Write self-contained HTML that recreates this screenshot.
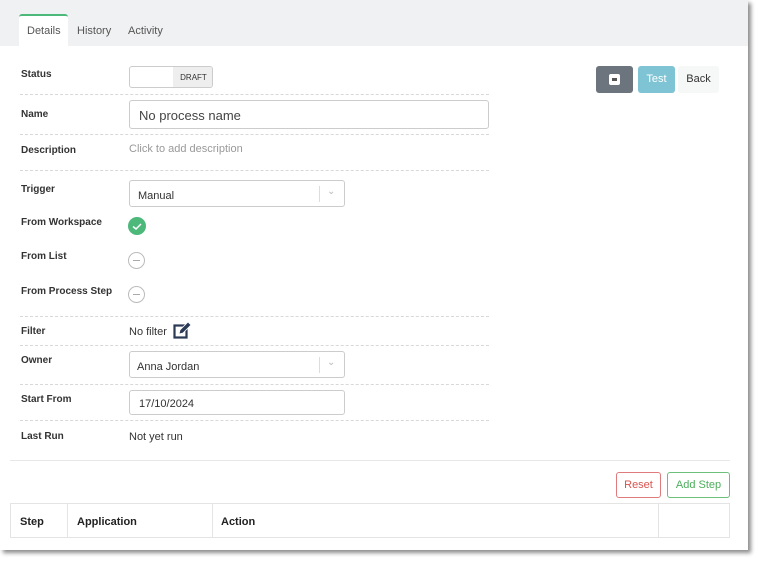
<!DOCTYPE html>
<html><head><style>
*{margin:0;padding:0;box-sizing:border-box}
body{width:758px;height:562px;background:#fff;font-family:"Liberation Sans",sans-serif;font-size:11px;color:#333;position:relative;overflow:hidden}
.panel{position:absolute;left:0;top:0;width:748px;height:550px;background:#fff;box-shadow:3px 3px 4px rgba(0,0,0,.45)}
.hdr{position:absolute;left:0;top:0;width:748px;height:46px;background:#f0f1f2}
.tab{position:absolute;top:21px;font-size:11px;color:#555}
.a{position:absolute}
.lbl{position:absolute;left:21px;font-weight:bold;font-size:10px;color:#333}
.dash{position:absolute;left:20px;width:469px;border-top:1px dashed #d8d8d8}
.box{position:absolute;border:1px solid #ccc;border-radius:3px;background:#fff}
.circ{position:absolute;width:17px;height:17px;border-radius:50%;border:1px solid #bbb}
.circ:after{content:"";position:absolute;left:4px;top:7px;width:7px;border-top:1px solid #aaa}
</style></head><body>
<div class="panel"></div>
<div class="hdr"></div>
<div class="a" style="left:19px;top:14px;width:49px;height:33px;background:#fff;border-top:2px solid #4cb87a;border-radius:3px 3px 0 0"></div>
<div class="tab" style="left:27px;top:25px">Details</div>
<div class="tab" style="left:77px;top:25px">History</div>
<div class="tab" style="left:128px;top:25px">Activity</div>

<div class="lbl" style="top:69px">Status</div>
<div class="box" style="left:129px;top:66px;width:84px;height:22px;overflow:hidden"><div class="a" style="left:43px;top:0;width:41px;height:22px;background:#eee;font-size:8px;color:#333;text-align:center;line-height:21px">DRAFT</div></div>
<div class="dash" style="top:94px"></div>
<div class="lbl" style="top:109px">Name</div>
<div class="box" style="left:129px;top:100px;width:360px;height:29px;font-size:13px;color:#444;padding:7px 0 0 9px">No process name</div>
<div class="dash" style="top:134px"></div>
<div class="lbl" style="top:145px">Description</div>
<div class="a" style="left:129px;top:143px;color:#999">Click to add description</div>
<div class="dash" style="top:170px"></div>
<div class="lbl" style="top:184px">Trigger</div>
<div class="box" style="left:129px;top:180px;width:216px;height:27px;padding:9px 0 0 8px">Manual<div class="a" style="left:189px;top:5px;height:16px;border-left:1px solid #ddd"></div><div class="a" style="left:197px;top:5px;color:#bbb;font-size:10px">&#8964;</div></div>
<div class="lbl" style="top:217px">From Workspace</div>
<div class="a" style="left:128px;top:217px;width:18px;height:18px;border-radius:50%;background:#4cb87a"><svg width="18" height="18"><path d="M5 9.5l3 2.5 5-5" stroke="#fff" stroke-width="1.5" fill="none"/></svg></div>
<div class="lbl" style="top:251px">From List</div>
<div class="circ" style="left:128px;top:252px"></div>
<div class="lbl" style="top:286px">From Process Step</div>
<div class="circ" style="left:128px;top:286px"></div>
<div class="dash" style="top:316px"></div>
<div class="lbl" style="top:326px">Filter</div>
<div class="a" style="left:129px;top:326px">No filter</div>
<svg class="a" style="left:173px;top:321px" width="20" height="18"><rect x="1.5" y="4.5" width="12" height="12" fill="none" stroke="#2a3a55" stroke-width="2.2"/><path d="M6 13l1-4 8-8 3 3-8 8z" fill="#2a3a55" stroke="#fff" stroke-width=".8"/></svg>
<div class="dash" style="top:345px"></div>
<div class="lbl" style="top:355px">Owner</div>
<div class="box" style="left:129px;top:351px;width:216px;height:27px;padding:9px 0 0 7px">Anna Jordan<div class="a" style="left:189px;top:5px;height:16px;border-left:1px solid #ddd"></div><div class="a" style="left:197px;top:5px;color:#bbb;font-size:10px">&#8964;</div></div>
<div class="dash" style="top:384px"></div>
<div class="lbl" style="top:394px">Start From</div>
<div class="box" style="left:129px;top:390px;width:216px;height:25px;padding:7px 0 0 9px">17/10/2024</div>
<div class="dash" style="top:420px"></div>
<div class="lbl" style="top:431px">Last Run</div>
<div class="a" style="left:129px;top:431px">Not yet run</div>
<div class="a" style="left:10px;top:460px;width:720px;border-top:1px solid #e8e8e8"></div>

<div class="a" style="left:596px;top:66px;width:37px;height:27px;background:#6c757d;border-radius:3px"><div class="a" style="left:13px;top:8px;width:11px;height:11px;background:#fff;border-radius:2px"><div class="a" style="left:3px;top:4px;width:5px;height:3px;background:#555"></div></div></div>
<div class="a" style="left:638px;top:66px;width:37px;height:27px;background:#7ec4d4;border-radius:3px;color:#fff;text-align:center;line-height:27px;font-size:11px">Test</div>
<div class="a" style="left:678px;top:66px;width:41px;height:27px;background:#f6f7f7;border-radius:3px;color:#333;text-align:center;line-height:27px;font-size:11px">Back</div>

<div class="a" style="left:616px;top:472px;width:45px;height:26px;border:1px solid #e07b7b;border-radius:3px;color:#d9534f;text-align:center;line-height:24px">Reset</div>
<div class="a" style="left:667px;top:472px;width:63px;height:26px;border:1px solid #6cc07a;border-radius:3px;color:#4cae5c;text-align:center;line-height:24px">Add Step</div>

<div class="a" style="left:10px;top:503px;width:720px;height:35px;border:1px solid #e4e4e4;font-weight:bold;color:#222">
<div class="a" style="left:9px;top:12px">Step</div>
<div class="a" style="left:56px;top:0;height:33px;border-left:1px solid #e4e4e4"></div>
<div class="a" style="left:66px;top:12px">Application</div>
<div class="a" style="left:201px;top:0;height:33px;border-left:1px solid #e4e4e4"></div>
<div class="a" style="left:210px;top:12px">Action</div>
<div class="a" style="left:647px;top:0;height:33px;border-left:1px solid #e4e4e4"></div>
</div>
</body></html>
